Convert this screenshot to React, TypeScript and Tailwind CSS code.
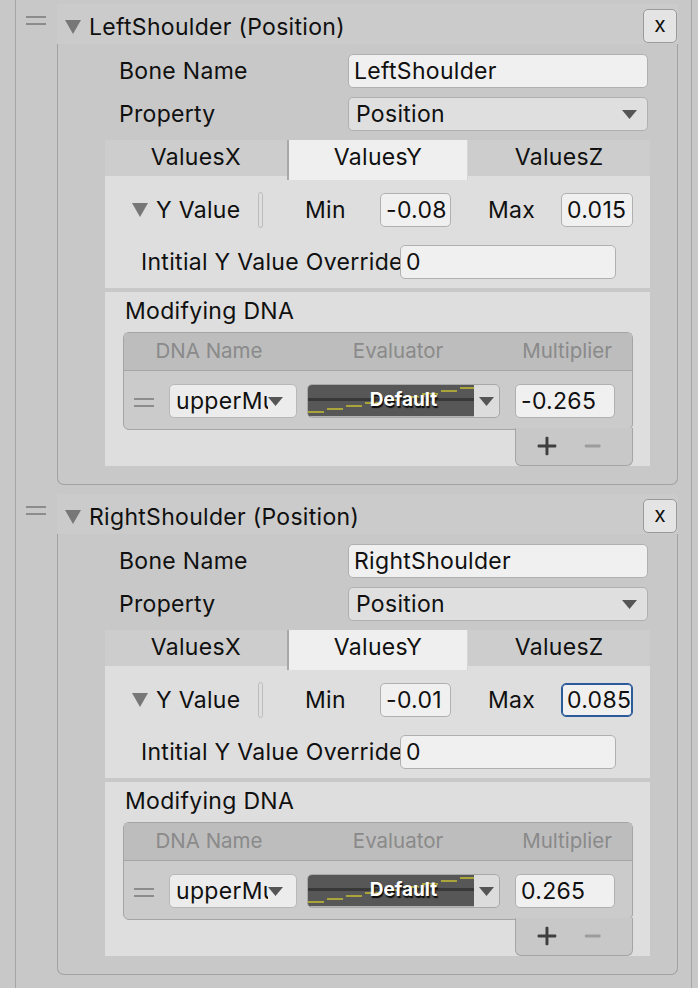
import React from 'react';

function Fold({ className }: { className?: string }) {
  return (
    <svg width="16" height="14" viewBox="0 0 16 14" className={className}>
      <polygon points="0,0 16,0 8,14" fill="#777777" />
    </svg>
  );
}

function DropArrow() {
  return (
    <svg width="15" height="9" viewBox="0 0 15 9" className="shrink-0">
      <polygon points="0,0 15,0 7.5,9" fill="#555555" />
    </svg>
  );
}

function Handle() {
  return (
    <div className="flex flex-col gap-[5px]">
      <div className="h-[2px] w-[20px] bg-[#8c8c8c]" />
      <div className="h-[2px] w-[20px] bg-[#8c8c8c]" />
    </div>
  );
}

function TextBox({ value, className, focus }: { value: string; className?: string; focus?: boolean }) {
  return (
    <div
      className={
        'h-[34px] flex items-center overflow-hidden whitespace-nowrap rounded-[5px] border bg-[#f0f0f0] px-[5px] text-[#101010] ' +
        (focus ? 'border-[#2c5b9a] shadow-[inset_0_0_0_1px_#2c5b9a] ' : 'border-[#b0b0b0] ') +
        (className ?? '')
      }
    >
      {value}
    </div>
  );
}

function Evaluator() {
  const steps: string[] = [];
  let y = 27;
  for (let x = 0; x < 166; x += 19) {
    steps.push(`M${x} ${y.toFixed(1)} H${x + 16}`);
    y -= 3;
  }
  return (
    <div className="relative flex h-[34px] w-[193px] shrink-0 rounded-[5px] border border-[#a8a8a8] bg-[#dcdcdc]">
      <svg width="166" height="32" viewBox="0 0 166 32" className="shrink-0 rounded-l-[4px]">
        <rect width="166" height="32" fill="#575757" />
        <rect y="13" width="166" height="3" fill="#383838" />
        <rect y="31" width="166" height="1" fill="#b4b4b4" />
        <path d={steps.join(' ')} stroke="#a9a53a" strokeWidth="2" fill="none" />
      </svg>
      <div className="flex flex-1 items-center justify-center">
        <DropArrow />
      </div>
      <span className="absolute inset-0 flex items-center justify-center pb-[2px] text-[19px] font-bold tracking-normal text-white [text-shadow:1px_2px_1px_#0a0a0a]">
        Default
      </span>
    </div>
  );
}

function Element({ name, min, max, mult, focusMax }: { name: string; min: string; max: string; mult: string; focusMax?: boolean }) {
  return (
    <div className="flex">
      <div className="w-[41px] shrink-0 pl-[10px] pt-[12px]">
        <Handle />
      </div>
      <div className="w-[621px] shrink-0">
        {/* header */}
        <div className="relative flex h-[40px] items-center bg-[#cbcbcb] pl-[8px] pt-[6px]">
          <Fold />
          <span className="ml-[8px] text-[#101010]">{name} (Position)</span>
          <div className="absolute right-[1px] top-[5px] flex h-[34px] w-[34px] items-center justify-center rounded-[5px] border border-[#9a9a9a] bg-[#e4e4e4] pb-[3px] text-[21px] tracking-normal text-[#101010]">
            x
          </div>
        </div>

        {/* body */}
        <div className="rounded-b-[7px] border-x border-b border-[#a2a2a2] pb-[18px] pt-[10px]">
          <div className="flex h-[34px] items-center pl-[61px] pr-[29px]">
            <span className="w-[229px] shrink-0 text-[#101010]">Bone Name</span>
            <TextBox value={name} className="flex-1" />
          </div>
          <div className="mt-[9px] flex h-[34px] items-center pl-[61px] pr-[29px]">
            <span className="w-[229px] shrink-0 text-[#101010]">Property</span>
            <div className="flex h-[34px] flex-1 items-center justify-between rounded-[5px] border border-[#b0b0b0] bg-[#dfdfdf] pl-[7px] pr-[10px] text-[#101010]">
              Position
              <DropArrow />
            </div>
          </div>

          {/* tabs */}
          <div className="ml-[47px] mr-[27px] mt-[9px]">
            <div className="grid h-[36px] grid-cols-3 bg-[#cdcdcd] text-[#101010]">
              <div className="flex items-center justify-center pb-[2px]">ValuesX</div>
              <div className="relative z-10 -mb-[4px] flex h-[40px] items-center justify-center border-l-2 border-r border-l-[#a8a8a8] border-r-[#d6d6d6] bg-[#efefef] pb-[6px]">
                ValuesY
              </div>
              <div className="flex items-center justify-center pb-[2px]">ValuesZ</div>
            </div>

            <div className="h-[112px] bg-[#dedede] pt-[17px] text-[#101010]">
              <div className="flex h-[34px] items-center pl-[27px]">
                <Fold />
                <span className="ml-[8px] w-[102px] shrink-0">Y Value</span>
                <div className="h-[36px] w-[5px] shrink-0 rounded-[3px] border border-[#bcbcbc]" />
                <span className="ml-[42px] w-[75px] shrink-0">Min</span>
                <TextBox value={min} className="w-[71px] shrink-0" />
                <span className="ml-[37px] w-[73px] shrink-0">Max</span>
                <TextBox value={max} className="w-[72px] shrink-0" focus={focusMax} />
              </div>
              <div className="mt-[18px] flex h-[34px] items-center pl-[36px]">
                <span className="w-[259px] shrink-0 overflow-hidden whitespace-nowrap">Intitial Y Value Override</span>
                <TextBox value="0" className="w-[216px] shrink-0" />
              </div>
            </div>

            {/* modifying dna */}
            <div className="mt-[4px] flex h-[174px] flex-col bg-[#dedede] pt-[6px]">
              <span className="h-[26px] pl-[20px] leading-[26px] text-[#101010]">Modifying DNA</span>
              <div className="ml-[18px] mr-[17px] mt-[8px] rounded-[6px] border border-[#a5a5a5] bg-[#cbcbcb]">
                <div className="flex h-[38px] items-center border-b border-[#a5a5a5] bg-[#bdbdbd] text-[20.5px] tracking-normal text-[#8a8a8a]">
                  <span className="w-[170px] text-center">DNA Name</span>
                  <span className="w-[208px] text-center">Evaluator</span>
                  <span className="w-[130px] text-center">Multiplier</span>
                </div>
                <div className="flex h-[58px] items-start pl-[10px] pt-[13px] text-[#101010]">
                  <div className="mt-[14px]">
                    <Handle />
                  </div>
                  <div className="ml-[15px] flex h-[34px] w-[128px] shrink-0 items-center rounded-[5px] border border-[#b8b8b8] bg-[#ececec] pl-[6px] pr-[9px]">
                    <span className="w-[92px] overflow-hidden whitespace-nowrap">upperMuscle</span>
                    <DropArrow />
                  </div>
                  <div className="ml-[10px]">
                    <Evaluator />
                  </div>
                  <TextBox value={mult} className="ml-[15px] w-[100px] shrink-0" />
                </div>
              </div>
              <div className="relative z-10 -mt-[2px] mr-[17px] flex h-[38px] w-[118px] items-center self-end rounded-b-[6px] border-x border-b border-[#a5a5a5] bg-[#c8c8c8] pb-[2px]">
                <svg width="118" height="20" viewBox="0 0 118 20">
                  <rect x="22" y="8.5" width="19" height="3" rx="1" fill="#3f3f3f" />
                  <rect x="30" y="0.5" width="3" height="19" rx="1" fill="#3f3f3f" />
                  <rect x="70" y="8.5" width="16" height="3" rx="1" fill="#9c9c9c" />
                </svg>
              </div>
            </div>
          </div>
        </div>
      </div>
    </div>
  );
}

export default function App() {
  return (
    <div className="h-[988px] w-[698px] overflow-hidden bg-[#c8c8c8] font-['Inter','Noto_Sans',sans-serif] text-[23px] tracking-[0.3px]">
      <div className="ml-[15px] flex h-full w-[677px] flex-col gap-[9px] border-x border-[#a5a5a5] pt-[4px]">
        <Element name="LeftShoulder" min="-0.08" max="0.015" mult="-0.265" />
        <Element name="RightShoulder" min="-0.01" max="0.085" mult="0.265" focusMax />
      </div>
    </div>
  );
}
